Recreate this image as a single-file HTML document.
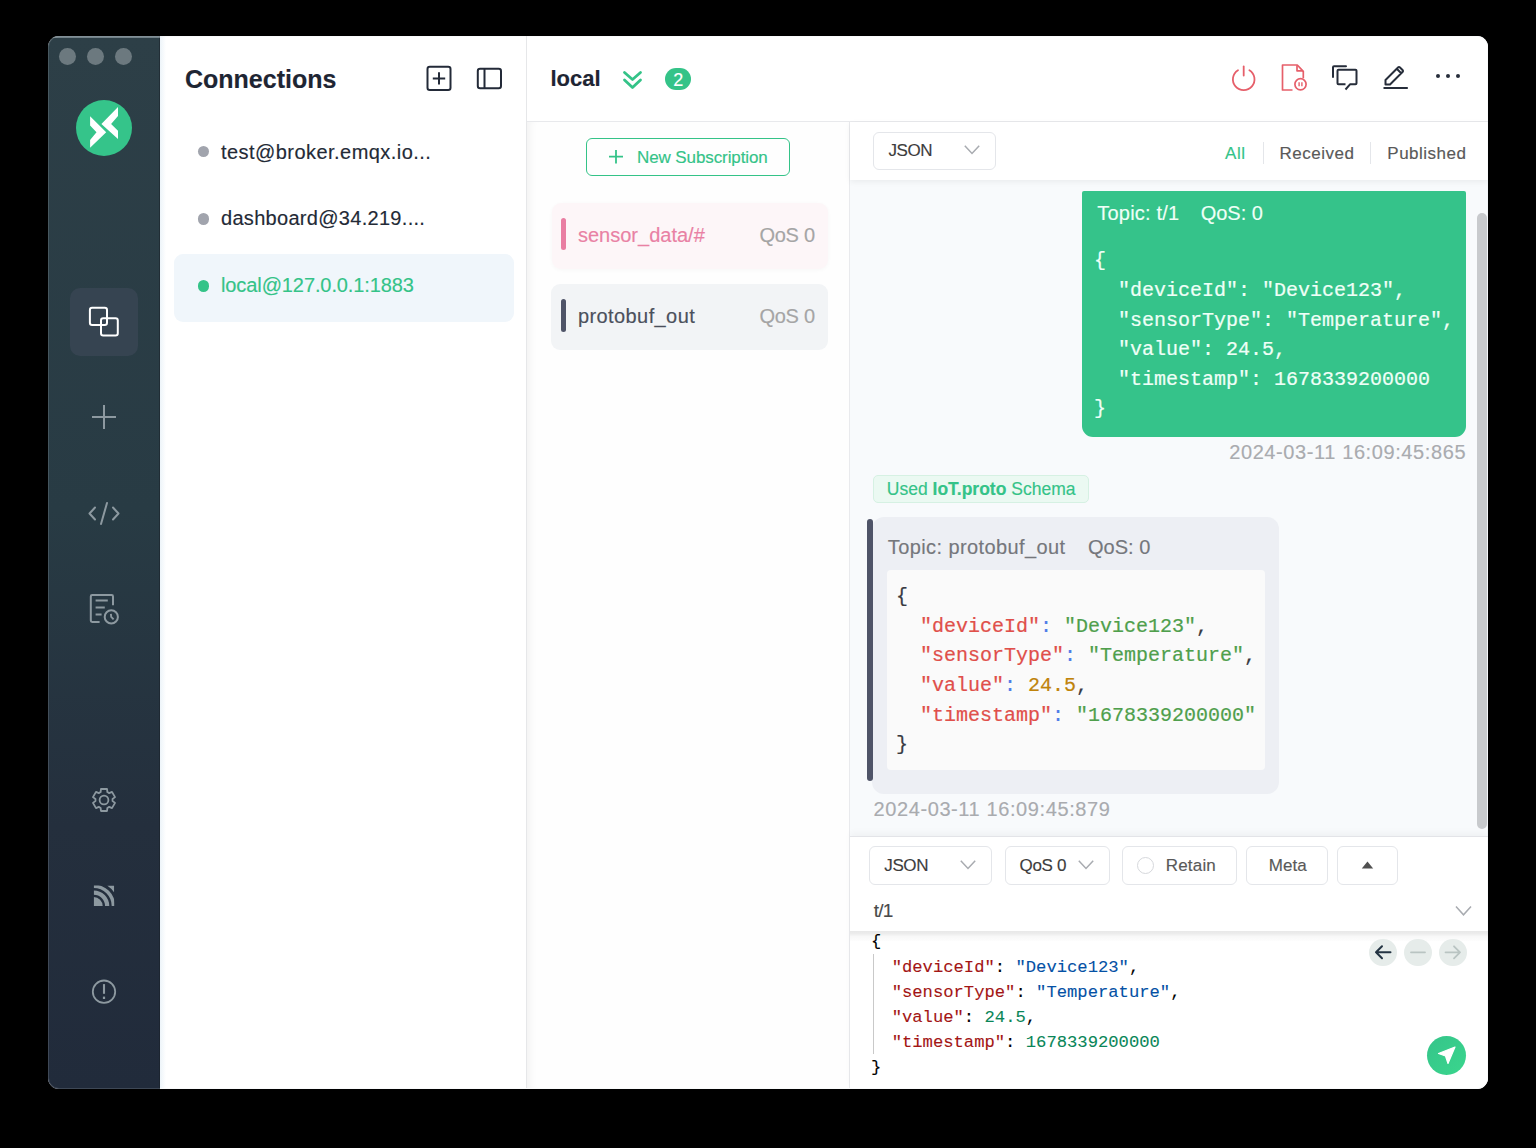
<!DOCTYPE html>
<html><head><meta charset="utf-8">
<style>
*{margin:0;padding:0;box-sizing:border-box}
html,body{width:1536px;height:1148px;background:#000;overflow:hidden;font-family:"Liberation Sans",sans-serif}
.abs{position:absolute}
svg.abs{overflow:visible}
#win{position:absolute;left:48px;top:36px;width:1440px;height:1052.8px;border-radius:11px;overflow:hidden;background:#fff}
#in{position:absolute;left:-48px;top:-36px;width:1536px;height:1148px}
.t{position:absolute;white-space:pre;line-height:1;-webkit-text-stroke:0.15px}
</style></head><body>
<div id="win"><div id="in">

<div class="abs" style="left:48px;top:36px;width:112px;height:1053px;background:linear-gradient(180deg,#2d3f47 0%,#283b44 45%,#242f3d 75%,#212b3b 100%)"></div>
<div class="abs" style="left:160px;top:36px;width:367px;height:1052px;background:#fff;border-right:1.5px solid #e6e7e9"></div>
<div class="abs" style="left:527px;top:36px;width:961px;height:86px;background:#fff;border-bottom:1px solid #e8e9ec"></div>
<div class="abs" style="left:527px;top:122px;width:323px;height:966px;background:#fefefe;border-right:1px solid #e9eaed;box-shadow:inset 9px 0 9px -6px rgba(0,0,0,0.05)"></div>
<div class="abs" style="left:158.6px;top:36px;width:1.4000000000000057px;height:1052px;background:rgba(25,32,40,0.55)"></div>
<div class="abs" style="left:160px;top:36px;width:6px;height:1052px;background:linear-gradient(90deg,#edf4f9,rgba(255,255,255,0))"></div>
<div class="abs" style="left:850px;top:180px;width:638px;height:656px;background:#f8fafc"></div>
<div class="abs" style="left:850px;top:122px;width:638px;height:58px;background:#fff;box-shadow:0 2px 6px rgba(0,0,0,0.06)"></div>
<div class="abs" style="left:48px;top:36px;width:112px;height:1.5px;background:rgba(200,210,215,0.45)"></div>
<div class="abs" style="left:58.900000000000006px;top:47.5px;width:17px;height:17px;border-radius:50%;background:#6c797f"></div>
<div class="abs" style="left:86.8px;top:47.5px;width:17px;height:17px;border-radius:50%;background:#6c797f"></div>
<div class="abs" style="left:114.8px;top:47.5px;width:17px;height:17px;border-radius:50%;background:#6c797f"></div>
<div class="abs" style="left:76px;top:99.6px;width:56px;height:56px;border-radius:50%;background:#35c48a"></div>
<svg class="abs" style="left:76px;top:99.6px" width="56" height="56" viewBox="0 0 56 56" fill="none"><path d="M14.1 16.3 L30.2 32.2 L14.1 47.8 L14.1 40 L20.5 32.2 L14.1 25.4 Z" fill="#fff"/><path d="M42 7.1 L25.4 23.9 L42 39 L42 30.7 L35.1 23.9 L42 16.1 Z" fill="#fff"/></svg>
<div class="abs" style="left:70px;top:288px;width:68px;height:68px;background:#364451;border-radius:10px"></div>
<svg class="abs" style="left:88px;top:306px" width="32" height="32" viewBox="0 0 32 32" fill="none"><rect x="1.9" y="1.8" width="17.1" height="17.2" rx="2.2" stroke="#fff" stroke-width="2"/><rect x="13" y="12.3" width="16.8" height="17.1" rx="2.2" stroke="#fff" stroke-width="2"/></svg>
<svg class="abs" style="left:92px;top:405px" width="24" height="24" viewBox="0 0 24 24" fill="none"><path d="M12 0 V24 M0 12 H24" stroke="#8d99a0" stroke-width="2"/></svg>
<svg class="abs" style="left:88px;top:502px" width="32" height="23" viewBox="0 0 32 23" fill="none"><path d="M7 5.5 L1.5 11.5 L7 17.5 M25 5.5 L30.5 11.5 L25 17.5 M19 1 L13 22" stroke="#8d99a0" stroke-width="2" stroke-linecap="round" stroke-linejoin="round"/></svg>
<svg class="abs" style="left:89px;top:594px" width="30" height="31" viewBox="0 0 30 31" fill="none"><path d="M10.6 27.9 H3.2 Q1.8 27.9 1.8 26.5 V2.4 Q1.8 1 3.2 1 H22.6 Q24 1 24 2.4 V11.2" stroke="#8d99a0" stroke-width="2"/><path d="M6.6 6.6 H18.8 M6.6 13.6 H15.8 M6.6 20.5 H12.6" stroke="#8d99a0" stroke-width="2"/><circle cx="22.3" cy="22.9" r="6.6" stroke="#8d99a0" stroke-width="2"/><path d="M21.9 19.8 L22.2 22.9 L24.6 25.3" stroke="#8d99a0" stroke-width="1.9"/></svg>
<svg class="abs" style="left:92px;top:788px" width="24" height="24" viewBox="0 0 24 24" fill="none"><path d="M8.65 4.08 L8.96 1.01 L15.04 1.01 L15.35 4.08 L17.19 5.14 L19.99 3.87 L23.04 9.14 L20.53 10.94 L20.53 13.06 L23.04 14.86 L19.99 20.13 L17.19 18.86 L15.35 19.92 L15.04 22.99 L8.96 22.99 L8.65 19.92 L6.81 18.86 L4.01 20.13 L0.96 14.86 L3.47 13.06 L3.47 10.94 L0.96 9.14 L4.01 3.87 L6.81 5.14Z" stroke="#8d99a0" stroke-width="1.8" stroke-linejoin="round"/><circle cx="12" cy="12" r="4.4" stroke="#8d99a0" stroke-width="1.8"/></svg>
<svg class="abs" style="left:93px;top:885px" width="22" height="22" viewBox="0 0 22 22" fill="none"><defs><clipPath id="rc"><rect x="0.7" y="0.5" width="20.5" height="20.5"/></clipPath></defs><path clip-path="url(#rc)" d="M0.7 12.0 A9 9 0 0 1 9.7 21.0 L0.7 21.0 Z M0.7 5.4 A15.6 15.6 0 0 1 16.3 21.0 L12.0 21.0 A11.3 11.3 0 0 0 0.7 9.7 Z M0.7 -0.5 A21.5 21.5 0 0 1 22.2 21.0 L18.7 21.0 A18 18 0 0 0 0.7 3.0 Z M14.12 0.5 L21.2 0.5 L21.2 7.58 A24.5 24.5 0 0 0 14.12 0.5 Z" fill="#8d99a0"/></svg>
<svg class="abs" style="left:91px;top:979px" width="26" height="26" viewBox="0 0 26 26" fill="none"><circle cx="13" cy="12.7" r="11.2" stroke="#8d99a0" stroke-width="1.8"/><path d="M13 5.1 V14.8" stroke="#8d99a0" stroke-width="2.1"/><rect x="11.9" y="17.6" width="2.2" height="2.4" fill="#8d99a0"/></svg>
<div class="t" style="left:185px;top:66.83px;font-size:25px;color:#1e2533;font-weight:700;font-family:'Liberation Sans',sans-serif;">Connections</div>
<svg class="abs" style="left:426px;top:65px" width="26" height="26" viewBox="0 0 26 26" fill="none"><rect x="1.5" y="1.7" width="23" height="23.4" rx="2.3" stroke="#232a38" stroke-width="2"/><path d="M13 7.2 V19.5 M6.8 13.4 H19.2" stroke="#232a38" stroke-width="2"/></svg>
<svg class="abs" style="left:476px;top:67px" width="27" height="23" viewBox="0 0 27 23" fill="none"><rect x="1.8" y="1.8" width="23.2" height="19.5" rx="2.3" stroke="#232a38" stroke-width="2"/><path d="M8.5 2 V21" stroke="#232a38" stroke-width="2"/></svg>
<div class="abs" style="left:197.95px;top:145.95px;width:11.5px;height:11.5px;border-radius:50%;background:#a1a4ad"></div>
<div class="t" style="left:221px;top:141.57px;font-size:20px;color:#232a36;font-weight:400;font-family:'Liberation Sans',sans-serif;letter-spacing:0.45px;">test@broker.emqx.io...</div>
<div class="abs" style="left:197.95px;top:213.15px;width:11.5px;height:11.5px;border-radius:50%;background:#a1a4ad"></div>
<div class="t" style="left:221px;top:208.27px;font-size:20px;color:#232a36;font-weight:400;font-family:'Liberation Sans',sans-serif;letter-spacing:0.3px;">dashboard@34.219....</div>
<div class="abs" style="left:174px;top:254px;width:340px;height:68px;background:#f0f6fb;border-radius:9px"></div>
<div class="abs" style="left:197.95px;top:280.45px;width:11.5px;height:11.5px;border-radius:50%;background:#34c388"></div>
<div class="t" style="left:221px;top:275.37px;font-size:20px;color:#34c388;font-weight:400;font-family:'Liberation Sans',sans-serif;letter-spacing:-0.1px;">local@127.0.0.1:1883</div>
<div class="t" style="left:550.5px;top:68.17px;font-size:22px;color:#1e2533;font-weight:700;font-family:'Liberation Sans',sans-serif;">local</div>
<svg class="abs" style="left:622px;top:70px" width="22" height="22" viewBox="0 0 22 22" fill="none"><path d="M2.5 2.5 L10.5 9.5 L18.5 2.5 M2.5 10 L10.5 17.5 L18.5 10" stroke="#34c388" stroke-width="2.8" stroke-linecap="round" stroke-linejoin="round"/></svg>
<div class="abs" style="left:665px;top:67.5px;width:26px;height:22.5px;background:#34c388;border-radius:11px"></div>
<div class="t" style="left:673.2px;top:71.06px;font-size:18px;color:#fff;font-weight:400;font-family:'Liberation Sans',sans-serif;">2</div>
<svg class="abs" style="left:1230px;top:64px" width="28" height="28" viewBox="0 0 28 28" fill="none"><path d="M8 6.2 A10.8 10.8 0 1 0 19.4 6.2" stroke="#e65f6a" stroke-width="1.8" stroke-linecap="round"/><path d="M13.7 2.5 V11.5" stroke="#e65f6a" stroke-width="1.8" stroke-linecap="round"/></svg>
<svg class="abs" style="left:1280px;top:62px" width="30" height="30" viewBox="0 0 30 30" fill="none"><path d="M12.5 28 H2.5 V3 H17.3 L23.3 9.3 V16.3" stroke="#e65f6a" stroke-width="1.7" stroke-linejoin="round"/><path d="M17 3.2 V8.8 H23" stroke="#e65f6a" stroke-width="1.7" stroke-linejoin="round"/><circle cx="20.5" cy="22.3" r="5.6" stroke="#e65f6a" stroke-width="1.7"/><path d="M19.1 20.3 V24.3 M21.9 20.3 V24.3" stroke="#e65f6a" stroke-width="1.4"/></svg>
<svg class="abs" style="left:1330px;top:63px" width="30" height="30" viewBox="0 0 30 30" fill="none"><path d="M3 14 V4.2 Q3 3.2 4 3.2 H16" stroke="#262d3a" stroke-width="2" stroke-linecap="round"/><path d="M8.5 6.8 H25.5 Q26.5 6.8 26.5 7.8 V20.3 Q26.5 21.3 25.5 21.3 H20 L15.5 26.5 M15.5 21.3 H8.5 Q7.5 21.3 7.5 20.3 V7.8 Q7.5 6.8 8.5 6.8" stroke="#262d3a" stroke-width="2" stroke-linejoin="round"/></svg>
<svg class="abs" style="left:1382px;top:63px" width="30" height="30" viewBox="0 0 30 30" fill="none"><path d="M3.5 21.5 V17 L16 4.5 Q17 3.5 18 4.5 L20.5 7 Q21.5 8 20.5 9 L8 21.5 Z M15 6 L19 10" stroke="#262d3a" stroke-width="2" stroke-linejoin="round"/><path d="M1.5 25 H25.8" stroke="#262d3a" stroke-width="2"/></svg>
<div class="abs" style="left:1436.1499999999999px;top:73.64999999999999px;width:4.3px;height:4.3px;border-radius:50%;background:#262d3a"></div>
<div class="abs" style="left:1446.05px;top:73.64999999999999px;width:4.3px;height:4.3px;border-radius:50%;background:#262d3a"></div>
<div class="abs" style="left:1455.9499999999998px;top:73.64999999999999px;width:4.3px;height:4.3px;border-radius:50%;background:#262d3a"></div>
<div class="abs" style="left:586px;top:138px;width:204px;height:38.30000000000001px;border:1.4px solid #34c388;border-radius:6px"></div>
<svg class="abs" style="left:608px;top:149px" width="16" height="16" viewBox="0 0 16 16" fill="none"><path d="M8 1 V14.5 M1 7.7 H15" stroke="#34c388" stroke-width="1.8"/></svg>
<div class="t" style="left:637px;top:148.71px;font-size:17px;color:#34c388;font-weight:400;font-family:'Liberation Sans',sans-serif;letter-spacing:-0.1px;">New Subscription</div>
<div class="abs" style="left:552px;top:203px;width:276px;height:66px;background:#fdf6f8;border-radius:9px;box-shadow:0 1px 4px rgba(0,0,0,0.03)"></div>
<div class="abs" style="left:561px;top:218.3px;width:5px;height:32.19999999999999px;background:#e97ea2;border-radius:3px"></div>
<div class="t" style="left:578px;top:225.27px;font-size:20px;color:#e981a4;font-weight:400;font-family:'Liberation Sans',sans-serif;">sensor_data/#</div>
<div class="t" style="left:759.5px;top:225.27px;font-size:20px;color:#a5a5a5;font-weight:400;font-family:'Liberation Sans',sans-serif;letter-spacing:-0.3px;">QoS 0</div>
<div class="abs" style="left:551px;top:284px;width:277px;height:65.5px;background:#f2f4f6;border-radius:9px"></div>
<div class="abs" style="left:561px;top:299px;width:5px;height:33.30000000000001px;background:#4f5468;border-radius:3px"></div>
<div class="t" style="left:578px;top:305.87px;font-size:20px;color:#4b505c;font-weight:400;font-family:'Liberation Sans',sans-serif;letter-spacing:0.4px;">protobuf_out</div>
<div class="t" style="left:759.5px;top:305.87px;font-size:20px;color:#a5a5a5;font-weight:400;font-family:'Liberation Sans',sans-serif;letter-spacing:-0.3px;">QoS 0</div>
<div class="abs" style="left:873px;top:131.5px;width:123px;height:38.5px;border:1px solid #e4e6ea;border-radius:6px;background:#fff"></div>
<div class="t" style="left:888.5px;top:142.21px;font-size:17px;color:#3d3d3d;font-weight:400;font-family:'Liberation Sans',sans-serif;letter-spacing:-0.4px;">JSON</div>
<svg class="abs" style="left:963px;top:144px" width="18" height="12" viewBox="0 0 18 12" fill="none"><path d="M1.8 1.8 L9 9.5 L16.2 1.8" stroke="#a8abb0" stroke-width="1.5"/></svg>
<div class="t" style="left:1225px;top:145.41px;font-size:17px;color:#34c388;font-weight:400;font-family:'Liberation Sans',sans-serif;letter-spacing:0.6px;">All</div>
<div class="abs" style="left:1262.5px;top:141.8px;width:1.0px;height:21.899999999999977px;background:#e4e6ea"></div>
<div class="t" style="left:1279.6px;top:145.41px;font-size:17px;color:#595959;font-weight:400;font-family:'Liberation Sans',sans-serif;letter-spacing:0.5px;">Received</div>
<div class="abs" style="left:1369.5px;top:141.8px;width:1.0px;height:21.899999999999977px;background:#e4e6ea"></div>
<div class="t" style="left:1387.3px;top:145.41px;font-size:17px;color:#595959;font-weight:400;font-family:'Liberation Sans',sans-serif;letter-spacing:0.5px;">Published</div>
<div class="abs" style="left:1082px;top:191px;width:384px;height:246px;background:#35c38a;border-radius:2px 2px 11px 11px"></div>
<div class="t" style="left:1097.3px;top:202.57px;font-size:20px;color:#effff7;font-weight:400;font-family:'Liberation Sans',sans-serif;letter-spacing:0.2px;">Topic: t/1</div>
<div class="t" style="left:1200.7px;top:202.57px;font-size:20px;color:#effff7;font-weight:400;font-family:'Liberation Sans',sans-serif;">QoS: 0</div>
<div class="t" style="left:1094px;top:251.48px;font-size:20px;color:#effff7;font-weight:400;font-family:'Liberation Mono',monospace;-webkit-text-stroke:0.22px currentColor">{</div>
<div class="t" style="left:1094px;top:281.08px;font-size:20px;color:#effff7;font-weight:400;font-family:'Liberation Mono',monospace;-webkit-text-stroke:0.22px currentColor">  "deviceId": "Device123",</div>
<div class="t" style="left:1094px;top:310.68px;font-size:20px;color:#effff7;font-weight:400;font-family:'Liberation Mono',monospace;-webkit-text-stroke:0.22px currentColor">  "sensorType": "Temperature",</div>
<div class="t" style="left:1094px;top:340.28px;font-size:20px;color:#effff7;font-weight:400;font-family:'Liberation Mono',monospace;-webkit-text-stroke:0.22px currentColor">  "value": 24.5,</div>
<div class="t" style="left:1094px;top:369.88px;font-size:20px;color:#effff7;font-weight:400;font-family:'Liberation Mono',monospace;-webkit-text-stroke:0.22px currentColor">  "timestamp": 1678339200000</div>
<div class="t" style="left:1094px;top:399.48px;font-size:20px;color:#effff7;font-weight:400;font-family:'Liberation Mono',monospace;-webkit-text-stroke:0.22px currentColor">}</div>
<div class="t" style="left:1229.2px;top:442.07px;font-size:20px;color:#a9abaf;font-weight:400;font-family:'Liberation Sans',sans-serif;letter-spacing:0.6px;">2024-03-11 16:09:45:865</div>
<div class="abs" style="left:873px;top:475.2px;width:216px;height:27.600000000000023px;background:#ebf9f2;border:1px solid #d6f1e3;border-radius:5px"></div>
<div class="t" style="left:886.8px;top:481.48px;font-size:17.5px;color:#34c388">Used <b>IoT.proto</b> Schema</div>
<div class="abs" style="left:872px;top:517px;width:407px;height:276.5px;background:#edeff4;border-radius:12px"></div>
<div class="abs" style="left:867px;top:519px;width:6px;height:261.5px;background:#4f5468;border-radius:3px"></div>
<div class="t" style="left:887.8px;top:537.17px;font-size:20px;color:#75777c;font-weight:400;font-family:'Liberation Sans',sans-serif;letter-spacing:0.4px;">Topic: protobuf_out</div>
<div class="t" style="left:1088px;top:537.17px;font-size:20px;color:#75777c;font-weight:400;font-family:'Liberation Sans',sans-serif;">QoS: 0</div>
<div class="abs" style="left:887px;top:570px;width:378px;height:200px;background:#fafafa;border-radius:4px"></div>
<div class="t" style="left:896px;top:587.28px;font-size:20px;color:#383a42;font-weight:400;font-family:'Liberation Mono',monospace;-webkit-text-stroke:0.2px"><span style="color:#383a42">{</span></div>
<div class="t" style="left:896px;top:616.88px;font-size:20px;color:#383a42;font-weight:400;font-family:'Liberation Mono',monospace;-webkit-text-stroke:0.2px">  <span style="color:#e04f4a">"deviceId"</span><span style="color:#4d7ee8">:</span> <span style="color:#4f9f4c">"Device123"</span><span style="color:#383a42">,</span></div>
<div class="t" style="left:896px;top:646.48px;font-size:20px;color:#383a42;font-weight:400;font-family:'Liberation Mono',monospace;-webkit-text-stroke:0.2px">  <span style="color:#e04f4a">"sensorType"</span><span style="color:#4d7ee8">:</span> <span style="color:#4f9f4c">"Temperature"</span><span style="color:#383a42">,</span></div>
<div class="t" style="left:896px;top:676.08px;font-size:20px;color:#383a42;font-weight:400;font-family:'Liberation Mono',monospace;-webkit-text-stroke:0.2px">  <span style="color:#e04f4a">"value"</span><span style="color:#4d7ee8">:</span> <span style="color:#c0830a">24.5</span><span style="color:#383a42">,</span></div>
<div class="t" style="left:896px;top:705.68px;font-size:20px;color:#383a42;font-weight:400;font-family:'Liberation Mono',monospace;-webkit-text-stroke:0.2px">  <span style="color:#e04f4a">"timestamp"</span><span style="color:#4d7ee8">:</span> <span style="color:#4f9f4c">"1678339200000"</span></div>
<div class="t" style="left:896px;top:735.28px;font-size:20px;color:#383a42;font-weight:400;font-family:'Liberation Mono',monospace;-webkit-text-stroke:0.2px"><span style="color:#383a42">}</span></div>
<div class="t" style="left:873.5px;top:798.77px;font-size:20px;color:#a9abaf;font-weight:400;font-family:'Liberation Sans',sans-serif;letter-spacing:0.6px;">2024-03-11 16:09:45:879</div>
<div class="abs" style="left:1477px;top:212.5px;width:10px;height:616.5px;background:#c8cacd;border-radius:5px"></div>
<div class="abs" style="left:850px;top:836px;width:638px;height:253px;background:#fff;border-top:1px solid #e3e4e8;box-shadow:0 -4px 6px rgba(0,0,0,0.03)"></div>
<div class="abs" style="left:869px;top:846.3px;width:122.5px;height:38.40000000000009px;border:1px solid #e4e6ea;border-radius:6px;background:#fff"></div>
<div class="t" style="left:884.3px;top:856.61px;font-size:17px;color:#3d3d3d;font-weight:400;font-family:'Liberation Sans',sans-serif;letter-spacing:-0.4px;">JSON</div>
<svg class="abs" style="left:959px;top:859px" width="18" height="12" viewBox="0 0 18 12" fill="none"><path d="M1.8 1.8 L9 9.5 L16.2 1.8" stroke="#a8abb0" stroke-width="1.5"/></svg>
<div class="abs" style="left:1004.5px;top:846.3px;width:105.0px;height:38.40000000000009px;border:1px solid #e4e6ea;border-radius:6px;background:#fff"></div>
<div class="t" style="left:1019.5px;top:856.61px;font-size:17px;color:#3d3d3d;font-weight:400;font-family:'Liberation Sans',sans-serif;letter-spacing:-0.3px;">QoS 0</div>
<svg class="abs" style="left:1077px;top:859px" width="18" height="12" viewBox="0 0 18 12" fill="none"><path d="M1.8 1.8 L9 9.5 L16.2 1.8" stroke="#a8abb0" stroke-width="1.5"/></svg>
<div class="abs" style="left:1122px;top:846.3px;width:115px;height:38.40000000000009px;border:1px solid #e4e6ea;border-radius:6px;background:#fff"></div>
<div class="abs" style="left:1136.7px;top:856.9px;width:17px;height:17px;border-radius:50%;border:1px solid #d6d8dc"></div>
<div class="t" style="left:1165.7px;top:856.61px;font-size:17px;color:#595959;font-weight:400;font-family:'Liberation Sans',sans-serif;letter-spacing:0.2px;">Retain</div>
<div class="abs" style="left:1245.5px;top:846.3px;width:82.5px;height:38.40000000000009px;border:1px solid #e4e6ea;border-radius:6px;background:#fff"></div>
<div class="t" style="left:1268.8px;top:856.61px;font-size:17px;color:#595959;font-weight:400;font-family:'Liberation Sans',sans-serif;">Meta</div>
<div class="abs" style="left:1337px;top:846.3px;width:61px;height:38.40000000000009px;border:1px solid #e4e6ea;border-radius:6px;background:#fff"></div>
<svg class="abs" style="left:1360px;top:860px" width="16" height="10" viewBox="0 0 16 10" fill="none"><path d="M1.8 8.5 L7.5 1.5 L13.2 8.5 Z" fill="#505050"/></svg>
<div class="t" style="left:873.7px;top:901.41px;font-size:19px;color:#4a4a4a;font-weight:400;font-family:'Liberation Sans',sans-serif;letter-spacing:-0.8px;">t/1</div>
<svg class="abs" style="left:1454px;top:904px" width="20" height="14" viewBox="0 0 20 14" fill="none"><path d="M2 2.5 L9.5 10.8 L17 2.5" stroke="#a8abb0" stroke-width="1.5"/></svg>
<div class="abs" style="left:850px;top:931px;width:638px;height:10px;background:linear-gradient(180deg,#e8e8e8 0%,#ececec 25%,#f8f8f8 55%,#fdfdfd 100%)"></div>
<div class="t" style="left:871px;top:933.42px;font-size:17.2px;color:#000000;font-weight:400;font-family:'Liberation Mono',monospace;-webkit-text-stroke:0.1px"><span style="color:#000000">{</span></div>
<div class="t" style="left:871px;top:958.62px;font-size:17.2px;color:#000000;font-weight:400;font-family:'Liberation Mono',monospace;-webkit-text-stroke:0.1px">  <span style="color:#a31515">"deviceId"</span><span style="color:#000000">:</span> <span style="color:#0451a5">"Device123"</span><span style="color:#000000">,</span></div>
<div class="t" style="left:871px;top:983.82px;font-size:17.2px;color:#000000;font-weight:400;font-family:'Liberation Mono',monospace;-webkit-text-stroke:0.1px">  <span style="color:#a31515">"sensorType"</span><span style="color:#000000">:</span> <span style="color:#0451a5">"Temperature"</span><span style="color:#000000">,</span></div>
<div class="t" style="left:871px;top:1009.02px;font-size:17.2px;color:#000000;font-weight:400;font-family:'Liberation Mono',monospace;-webkit-text-stroke:0.1px">  <span style="color:#a31515">"value"</span><span style="color:#000000">:</span> <span style="color:#098658">24.5</span><span style="color:#000000">,</span></div>
<div class="t" style="left:871px;top:1034.22px;font-size:17.2px;color:#000000;font-weight:400;font-family:'Liberation Mono',monospace;-webkit-text-stroke:0.1px">  <span style="color:#a31515">"timestamp"</span><span style="color:#000000">:</span> <span style="color:#098658">1678339200000</span></div>
<div class="t" style="left:871px;top:1059.42px;font-size:17.2px;color:#000000;font-weight:400;font-family:'Liberation Mono',monospace;-webkit-text-stroke:0.1px"><span style="color:#000000">}</span></div>
<div class="abs" style="left:873px;top:954px;width:1px;height:100px;background:#c9c9c9"></div>
<div class="abs" style="left:1369.25px;top:938.55px;width:27.5px;height:27.5px;border-radius:50%;background:#e6ecea"></div>
<div class="abs" style="left:1404.25px;top:938.55px;width:27.5px;height:27.5px;border-radius:50%;background:#e6ecea"></div>
<div class="abs" style="left:1439.45px;top:938.55px;width:27.5px;height:27.5px;border-radius:50%;background:#e6ecea"></div>
<svg class="abs" style="left:1373px;top:943px" width="20" height="18" viewBox="0 0 20 18" fill="none"><path d="M17.5 9.3 H3 M9 3.3 L3 9.3 L9 15.3" stroke="#243443" stroke-width="2" stroke-linecap="round" stroke-linejoin="round"/></svg>
<svg class="abs" style="left:1408px;top:943px" width="20" height="18" viewBox="0 0 20 18" fill="none"><path d="M3 9.3 H17" stroke="#b9c4c2" stroke-width="1.8" stroke-linecap="round"/></svg>
<svg class="abs" style="left:1443px;top:943px" width="20" height="18" viewBox="0 0 20 18" fill="none"><path d="M2.5 9.3 H17 M11 3.3 L17 9.3 L11 15.3" stroke="#b9c4c2" stroke-width="1.8" stroke-linecap="round" stroke-linejoin="round"/></svg>
<div class="abs" style="left:1426.6px;top:1035.7px;width:39.3px;height:39.3px;border-radius:50%;background:linear-gradient(135deg,#35c48a,#3ad68d)"></div>
<svg class="abs" style="left:1426.3px;top:1035.3px" width="40" height="40" viewBox="0 0 40 40" fill="none"><path d="M29 12 L12.5 18.5 L19.5 21 L22 28.5 Z" fill="#fff" stroke="#fff" stroke-width="1.2" stroke-linejoin="round"/></svg>
</div></div>
<div class="abs" style="left:48px;top:36px;width:1440px;height:1052.8px;border-radius:11px;border:1px solid rgba(220,225,230,0.16);pointer-events:none"></div>
</body></html>
